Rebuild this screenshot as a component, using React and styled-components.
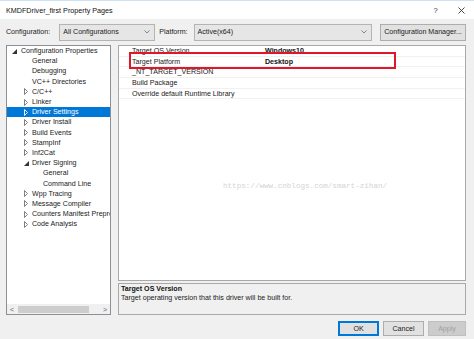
import React from 'react';
import styled, { createGlobalStyle } from 'styled-components';

const GlobalStyle = createGlobalStyle`
  html, body {
    margin: 0;
    padding: 0;
  }
  body {
    background: #f0f0f0;
    font-family: "Liberation Sans", Arial, sans-serif;
    font-size: 7.1px;
    color: #1b1b1b;
  }
`;

const Dialog = styled.div`
  width: 474px;
  height: 339px;
  display: flex;
  flex-direction: column;
  background: #f0f0f0;
  overflow: hidden;
`;

const TitleBar = styled.div`
  height: 19px;
  flex: none;
  box-sizing: border-box;
  border-top: 1px solid #cde2f4;
  background: #ffffff;
  display: flex;
  align-items: center;
  padding-left: 6px;
`;

const Title = styled.div`
  flex: 1;
  font-size: 7.2px;
  color: #111;
`;

const TitleButton = styled.div`
  width: ${p => p.w}px;
  height: 100%;
  display: flex;
  align-items: center;
  justify-content: center;
  font-size: 7.5px;
  color: #333;
`;

const Toolbar = styled.div`
  height: 26px;
  flex: none;
  display: flex;
  align-items: center;
  padding: 0 8px 0 6px;
`;

const Label = styled.span`
  margin-right: ${p => p.gap}px;
  white-space: nowrap;
`;

const Select = styled.div`
  box-sizing: border-box;
  height: 17px;
  width: ${p => (p.w ? `${p.w}px` : 'auto')};
  flex: ${p => (p.w ? 'none' : '1')};
  margin-right: ${p => p.gap || 0}px;
  border: 1px solid #b4b4b4;
  background: #e6e6e6;
  display: flex;
  align-items: center;
  padding: 0 4px 0 3px;
  color: #222;

  & > span {
    flex: 1;
  }
`;

const Button = styled.div`
  box-sizing: border-box;
  width: ${p => p.w}px;
  height: ${p => p.h || 15}px;
  flex: none;
  display: flex;
  align-items: center;
  justify-content: center;
  background: ${p => (p.disabled ? '#cccccc' : '#e1e1e1')};
  border: 1px solid ${p => (p.primary ? '#0078d7' : p.disabled ? '#bfbfbf' : '#adadad')};
  box-shadow: ${p => (p.primary ? 'inset 0 0 0 1px #0078d7' : 'none')};
  color: ${p => (p.disabled ? '#a0a0a0' : '#1b1b1b')};
  white-space: nowrap;
`;

const Main = styled.div`
  height: 270px;
  flex: none;
  display: flex;
  gap: 7px;
  padding: 0 8px 0 6px;
`;

const TreePanel = styled.div`
  box-sizing: border-box;
  width: 105px;
  border: 1px solid #8c9096;
  background: #fff;
  display: flex;
  flex-direction: column;
`;

const TreeList = styled.div`
  flex: 1;
  overflow: hidden;
`;

const TreeRow = styled.div`
  height: 10.2px;
  display: flex;
  align-items: center;
  padding-left: ${p => 4 + p.level * 11}px;
  background: ${p => (p.selected ? '#0078d7' : 'transparent')};
  color: ${p => (p.selected ? '#ffffff' : '#1b1b1b')};
  white-space: nowrap;
  overflow: hidden;
`;

const Expander = styled.span`
  width: 10px;
  flex: none;
  display: flex;
  align-items: center;
  padding-left: ${p => p.pad}px;
  box-sizing: border-box;
`;

const HScroll = styled.div`
  height: 10px;
  flex: none;
  background: #f0f0f0;
  display: flex;
  align-items: center;
  padding: 0 3px;
  gap: 4px;
  color: #606060;
  font-size: 7px;
`;

const Thumb = styled.div`
  width: 71px;
  height: 7px;
  background: #cdcdcd;
`;

const RightColumn = styled.div`
  flex: 1;
  display: flex;
  flex-direction: column;
  gap: 2px;
`;

const Grid = styled.div`
  position: relative;
  box-sizing: border-box;
  flex: 1;
  border: 1px solid #a9a9a9;
  background: #fff;
`;

const GridRow = styled.div`
  box-sizing: border-box;
  height: 10.7px;
  display: grid;
  grid-template-columns: 145px 1fr;
  align-items: center;
  border-bottom: 1px solid #f1f1f1;
  white-space: nowrap;
`;

const PropName = styled.span`
  padding-left: 13px;
  color: #222;
`;

const PropValue = styled.span`
  padding-left: 1px;
  font-weight: bold;
  color: #111;
`;

const Highlight = styled.div`
  position: absolute;
  left: 10px;
  top: 6px;
  width: 267px;
  height: 17px;
  box-sizing: border-box;
  border: 2px solid #e0162b;
`;

const Watermark = styled.div`
  position: absolute;
  left: 104px;
  top: 136px;
  font-family: "Liberation Mono", "Courier New", monospace;
  font-size: 7.6px;
  color: #d4d4d4;
  white-space: nowrap;
`;

const Description = styled.div`
  box-sizing: border-box;
  height: 32px;
  flex: none;
  border: 1px solid #a9a9a9;
  background: #f0f0f0;
  padding: 1px 2px;
  display: flex;
  flex-direction: column;
  gap: 1px;
`;

const DescTitle = styled.div`
  font-weight: bold;
  color: #111;
`;

const Footer = styled.div`
  flex: none;
  display: flex;
  justify-content: flex-end;
  gap: 4px;
  padding: 6px 8px 0 0;
`;

const ExpandedIcon = ({ color = '#333' }) => (
  <svg width="5" height="5" viewBox="0 0 5 5">
    <polygon points="5,0 5,5 0,5" fill={color} />
  </svg>
);

const CollapsedIcon = ({ color = '#707070' }) => (
  <svg width="4" height="7" viewBox="0 0 4 7">
    <polygon points="0.5,0.5 3.5,3.5 0.5,6.5" fill="none" stroke={color} strokeWidth="0.9" />
  </svg>
);

const Chevron = () => (
  <svg width="6" height="4" viewBox="0 0 6 4">
    <polyline points="0.5,0.5 3,3 5.5,0.5" fill="none" stroke="#777" strokeWidth="0.9" />
  </svg>
);

const CloseIcon = () => (
  <svg width="7" height="7" viewBox="0 0 7 7">
    <path d="M0.5 0.5 L6.5 6.5 M6.5 0.5 L0.5 6.5" stroke="#333" strokeWidth="0.9" />
  </svg>
);

const tree = [
  { label: 'Configuration Properties', level: 0, state: 'open' },
  { label: 'General', level: 1 },
  { label: 'Debugging', level: 1 },
  { label: 'VC++ Directories', level: 1 },
  { label: 'C/C++', level: 1, state: 'closed' },
  { label: 'Linker', level: 1, state: 'closed' },
  { label: 'Driver Settings', level: 1, state: 'closed', selected: true },
  { label: 'Driver Install', level: 1, state: 'closed' },
  { label: 'Build Events', level: 1, state: 'closed' },
  { label: 'StampInf', level: 1, state: 'closed' },
  { label: 'Inf2Cat', level: 1, state: 'closed' },
  { label: 'Driver Signing', level: 1, state: 'open' },
  { label: 'General', level: 2 },
  { label: 'Command Line', level: 2 },
  { label: 'Wpp Tracing', level: 1, state: 'closed' },
  { label: 'Message Compiler', level: 1, state: 'closed' },
  { label: 'Counters Manifest Preproc', level: 1, state: 'closed' },
  { label: 'Code Analysis', level: 1, state: 'closed' },
];

const properties = [
  ['Target OS Version', 'Windows10'],
  ['Target Platform', 'Desktop'],
  ['_NT_TARGET_VERSION', ''],
  ['Build Package', ''],
  ['Override default Runtime Library', ''],
];

const TreeItem = ({ item }) => {
  const iconColor = item.selected ? '#ffffff' : undefined;
  return (
    <TreeRow level={item.level} selected={item.selected}>
      <Expander pad={item.level === 0 ? 1 : 2}>
        {item.state === 'open' && <ExpandedIcon />}
        {item.state === 'closed' && <CollapsedIcon color={iconColor} />}
      </Expander>
      {item.label}
    </TreeRow>
  );
};

export default function App() {
  return (
    <>
      <GlobalStyle />
      <Dialog>
        <TitleBar>
          <Title>KMDFDriver_first Property Pages</Title>
          <TitleButton w={27}>?</TitleButton>
          <TitleButton w={25}><CloseIcon /></TitleButton>
        </TitleBar>

        <Toolbar>
          <Label gap={9}>Configuration:</Label>
          <Select w={96} gap={4}>
            <span>All Configurations</span>
            <Chevron />
          </Select>
          <Label gap={6}>Platform:</Label>
          <Select gap={8}>
            <span>Active(x64)</span>
            <Chevron />
          </Select>
          <Button w={86} h={17}>Configuration Manager...</Button>
        </Toolbar>

        <Main>
          <TreePanel>
            <TreeList>
              {tree.map((item, i) => (
                <TreeItem key={i} item={item} />
              ))}
            </TreeList>
            <HScroll>
              <span>&lt;</span>
              <Thumb />
              <span style={{ marginLeft: 'auto' }}>&gt;</span>
            </HScroll>
          </TreePanel>

          <RightColumn>
            <Grid>
              {properties.map(([name, value]) => (
                <GridRow key={name}>
                  <PropName>{name}</PropName>
                  <PropValue>{value}</PropValue>
                </GridRow>
              ))}
              <Highlight />
              <Watermark>https://www.cnblogs.com/smart-zihan/</Watermark>
            </Grid>
            <Description>
              <DescTitle>Target OS Version</DescTitle>
              <div>Target operating version that this driver will be built for.</div>
            </Description>
          </RightColumn>
        </Main>

        <Footer>
          <Button w={41} primary>OK</Button>
          <Button w={41}>Cancel</Button>
          <Button w={38} disabled>Apply</Button>
        </Footer>
      </Dialog>
    </>
  );
}
